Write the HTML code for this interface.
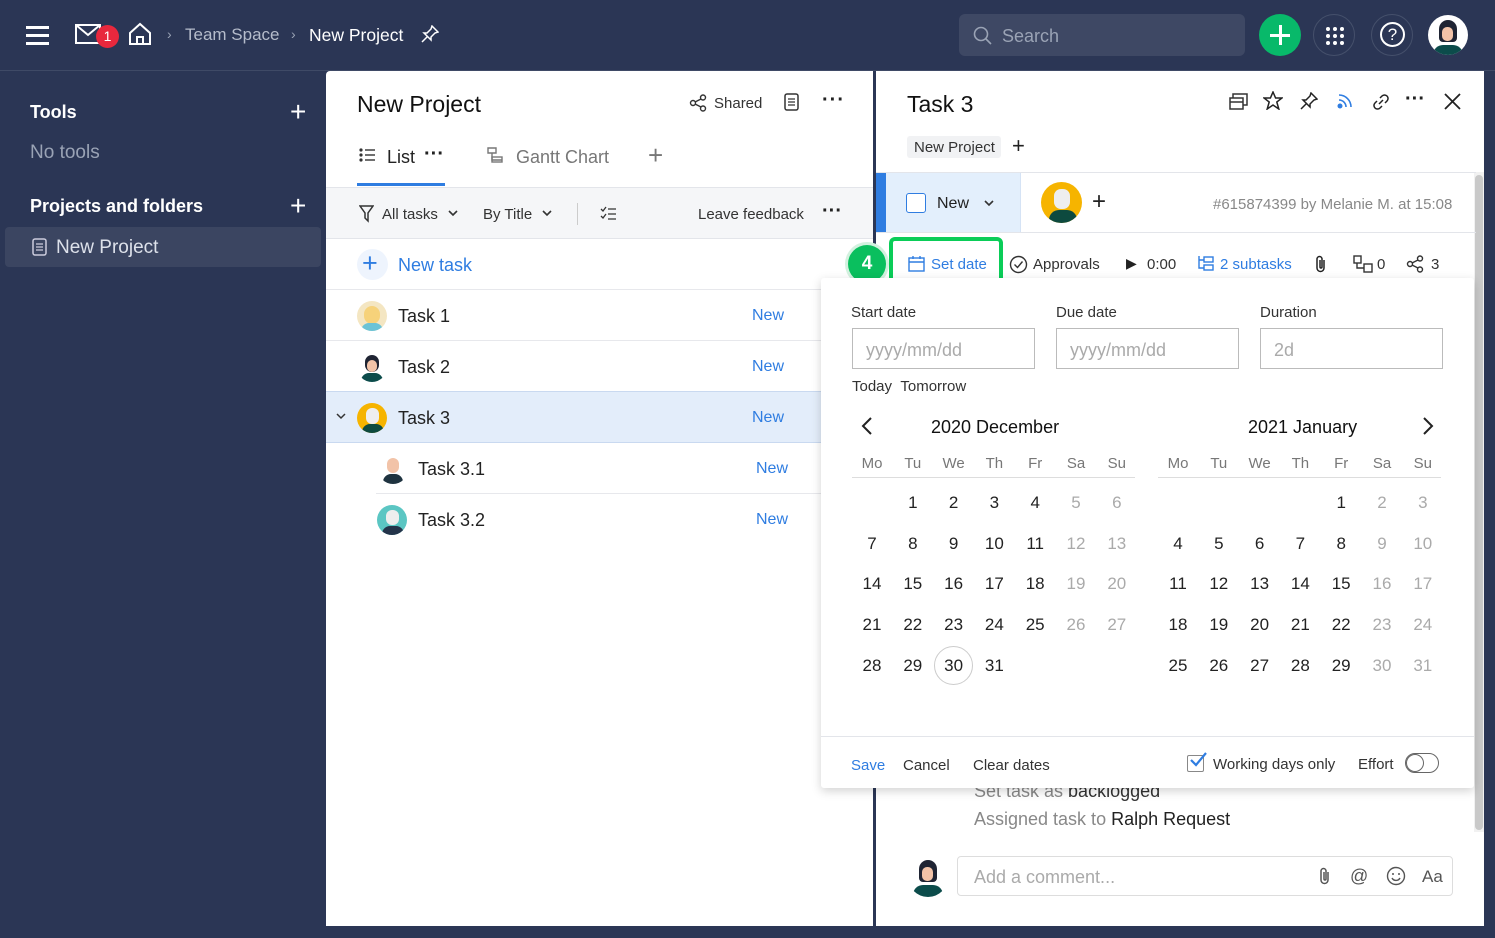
<!DOCTYPE html>
<html><head><meta charset="utf-8"><style>
*{box-sizing:border-box;margin:0;padding:0}
body{width:1495px;height:938px;background:#2b3655;font-family:"Liberation Sans",sans-serif;position:relative;overflow:hidden;color:#222}
.a{position:absolute;white-space:nowrap}
.w{color:#fff}
.g{color:#9aa3b5}
.blue{color:#2f7de1}
.cal span{position:absolute;width:40px;text-align:center;font-size:17px;color:#222;transform:translateX(-50%)}
.cal span.gr{color:#aaa}
.cal span.h{font-size:15px;color:#777}
.av{position:absolute;border-radius:50%;overflow:hidden}
</style></head><body>
<div class="a" style="left:0;top:70px;width:1495px;height:1px;background:#3f4a66"></div>
<div class="a" style="left:26px;top:26px;width:23px;height:3px;background:#fff;box-shadow:0 8px 0 #fff,0 16px 0 #fff"></div>
<svg class="a" style="left:75px;top:24px" width="26" height="20" viewBox="0 0 26 20"><rect x="1" y="1" width="24" height="18" fill="none" stroke="#fff" stroke-width="2"/><path d="M1 1 L13 11 L25 1" fill="none" stroke="#fff" stroke-width="2"/></svg>
<div class="a w" style="left:96px;top:25px;width:23px;height:23px;border-radius:50%;background:#e8283d;font-size:14px;text-align:center;line-height:23px">1</div>
<svg class="a" style="left:128px;top:22px" width="24" height="24" viewBox="0 0 24 24"><path d="M2 11 L12 2 L22 11 V22 H2 Z M9 22 V15 H15 V22" fill="none" stroke="#fff" stroke-width="2"/></svg>
<div class="a g" style="left:167px;top:26px;font-size:14px">›</div>
<div class="a" style="left:185px;top:25px;font-size:17px;color:#b5bccb">Team Space</div>
<div class="a g" style="left:291px;top:26px;font-size:14px">›</div>
<div class="a w" style="left:309px;top:25px;font-size:17.5px">New Project</div>
<svg class="a" style="left:421px;top:25px" width="18" height="18"><path d="M11 1L17 7L14 8L10 12L10 15L3 8L6 8L10 4Z M6.5 11.5L1 17" fill="none" stroke="#fff" stroke-width="1.5"/></svg>
<div class="a" style="left:959px;top:14px;width:286px;height:42px;border-radius:6px;background:#3e4864"></div>
<svg class="a" style="left:973px;top:26px" width="19" height="19"><circle cx="8" cy="8" r="6.5" fill="none" stroke="#9aa3b5" stroke-width="1.6"/><path d="M13 13 L18 18" stroke="#9aa3b5" stroke-width="1.6"/></svg>
<div class="a g" style="left:1002px;top:26px;font-size:18px">Search</div>
<div class="a" style="left:1259px;top:14px;width:42px;height:42px;border-radius:50%;background:#08b96a"></div>
<div class="a" style="left:1270px;top:34px;width:20px;height:2.5px;background:#fff"></div>
<div class="a" style="left:1279px;top:25px;width:2.5px;height:20px;background:#fff"></div>
<div class="a" style="left:1313px;top:14px;width:42px;height:42px;border-radius:50%;border:1px solid #45506b"></div>
<svg class="a" style="left:1325px;top:26px" width="20" height="20"><g fill="#fff"><circle cx="3" cy="3" r="2"/><circle cx="10" cy="3" r="2"/><circle cx="17" cy="3" r="2"/><circle cx="3" cy="10" r="2"/><circle cx="10" cy="10" r="2"/><circle cx="17" cy="10" r="2"/><circle cx="3" cy="17" r="2"/><circle cx="10" cy="17" r="2"/><circle cx="17" cy="17" r="2"/></g></svg>
<div class="a" style="left:1371px;top:14px;width:42px;height:42px;border-radius:50%;border:1px solid #45506b"></div>
<div class="a w" style="left:1380px;top:22px;width:25px;height:25px;border-radius:50%;border:2px solid #fff;text-align:center;font-size:17px;line-height:22px">?</div>
<div class="av" style="left:1428px;top:15px;width:40px;height:40px;background:#fff"><div class="a" style="left:11px;top:5px;width:18px;height:22px;border-radius:9px 9px 4px 4px;background:#1f2433"></div><div class="a" style="left:14px;top:12px;width:11px;height:14px;border-radius:5px;background:#f2c3a8"></div><div class="a" style="left:5px;top:30px;width:30px;height:14px;border-radius:10px 10px 0 0;background:#0c4c4b"></div></div>

<div class="a w" style="left:30px;top:102px;font-size:18px;font-weight:bold">Tools</div>
<div class="a w" style="left:290px;top:96px;font-size:28px;font-weight:300">+</div>
<div class="a" style="left:30px;top:142px;font-size:19px;color:#9aa3b5">No tools</div>
<div class="a w" style="left:30px;top:196px;font-size:18px;font-weight:bold">Projects and folders</div>
<div class="a w" style="left:290px;top:190px;font-size:28px;font-weight:300">+</div>
<div class="a" style="left:5px;top:227px;width:316px;height:40px;border-radius:4px;background:#3b4561"></div>
<svg class="a" style="left:32px;top:237px" width="15" height="19"><rect x="1" y="2" width="13" height="16" rx="2" fill="none" stroke="#ccd" stroke-width="1.5"/><path d="M4 7H11M4 10H11M4 13H11" stroke="#ccd" stroke-width="1.3"/></svg>
<div class="a" style="left:56px;top:237px;font-size:19px;color:#dde1ea">New Project</div>

<div class="a" style="left:326px;top:71px;width:547px;height:855px;background:#fff;border-radius:4px 0 0 0"></div>
<div class="a" style="left:357px;top:91px;font-size:23px;color:#111">New Project</div>
<svg class="a" style="left:689px;top:94px" width="18" height="18"><circle cx="14" cy="3.5" r="2.5" fill="none" stroke="#333" stroke-width="1.4"/><circle cx="4" cy="9" r="2.5" fill="none" stroke="#333" stroke-width="1.4"/><circle cx="14" cy="14.5" r="2.5" fill="none" stroke="#333" stroke-width="1.4"/><path d="M6 8L12 5M6 10L12 13" stroke="#333" stroke-width="1.4"/></svg>
<div class="a" style="left:714px;top:95px;font-size:15px;color:#333">Shared</div>
<svg class="a" style="left:784px;top:92px" width="15" height="19"><rect x="1" y="2" width="13" height="16" rx="2" fill="none" stroke="#333" stroke-width="1.5"/><path d="M4 7H11M4 10H11M4 13H11" stroke="#333" stroke-width="1.3"/></svg>
<div class="a" style="left:822px;top:89px;font-size:20px;font-weight:bold;letter-spacing:1px">···</div>
<svg class="a" style="left:359px;top:148px" width="16" height="14"><g fill="#333"><circle cx="2" cy="2" r="1.6"/><circle cx="2" cy="7" r="1.6"/><circle cx="2" cy="12" r="1.6"/><rect x="6" y="1.3" width="10" height="1.4"/><rect x="6" y="6.3" width="10" height="1.4"/><rect x="6" y="11.3" width="10" height="1.4"/></g></svg>
<div class="a" style="left:387px;top:147px;font-size:18px;color:#222">List</div>
<div class="a" style="left:424px;top:143px;font-size:20px;font-weight:bold">···</div>
<div class="a" style="left:357px;top:183px;width:88px;height:3px;background:#2f7de1"></div>
<svg class="a" style="left:486px;top:147px" width="18" height="16"><path d="M2 1H10V6H2ZM6 6V13H16" fill="none" stroke="#777" stroke-width="1.4"/><rect x="6" y="10" width="10" height="5" fill="none" stroke="#777" stroke-width="1.4"/></svg>
<div class="a" style="left:516px;top:147px;font-size:18px;color:#777">Gantt Chart</div>
<div class="a" style="left:648px;top:140px;font-size:26px;color:#777;font-weight:300">+</div>
<div class="a" style="left:326px;top:187px;width:547px;height:52px;background:#f5f6f8;border-top:1px solid #e3e5ea;border-bottom:1px solid #e3e5ea"></div>
<svg class="a" style="left:359px;top:205px" width="15" height="18"><path d="M1 1H14L9 8V16L6 13V8Z" fill="none" stroke="#333" stroke-width="1.5"/></svg>
<div class="a" style="left:382px;top:206px;font-size:15px;color:#333">All tasks</div>
<svg class="a" style="left:448px;top:210px" width="10" height="7"><path d="M1 1L5 5L9 1" fill="none" stroke="#333" stroke-width="1.6"/></svg>
<div class="a" style="left:483px;top:206px;font-size:15px;color:#333">By Title</div>
<svg class="a" style="left:542px;top:210px" width="10" height="7"><path d="M1 1L5 5L9 1" fill="none" stroke="#333" stroke-width="1.6"/></svg>
<div class="a" style="left:577px;top:203px;width:1px;height:22px;background:#ccc"></div>
<svg class="a" style="left:600px;top:206px" width="17" height="15"><path d="M1 3L3 5L6 1M1 10L3 12L6 8M8 3H16M8 8H16M8 13H16" fill="none" stroke="#333" stroke-width="1.3"/></svg>
<div class="a" style="left:698px;top:206px;font-size:15px;color:#333">Leave feedback</div>
<div class="a" style="left:822px;top:200px;font-size:20px;font-weight:bold">···</div>
<div class="a" style="left:357px;top:249px;width:31px;height:31px;border-radius:50%;background:#eef4fd"></div>
<div class="a blue" style="left:362px;top:248px;font-size:27px;font-weight:300">+</div>
<div class="a blue" style="left:398px;top:255px;font-size:18px">New task</div>
<div class="a" style="left:326px;top:289px;width:495px;height:1px;background:#e7e8ec"></div>
<div class="a" style="left:326px;top:340px;width:495px;height:1px;background:#e7e8ec"></div>
<div class="a" style="left:326px;top:391px;width:495px;height:52px;background:#e3edfa;border-top:1px solid #c9d9f0;border-bottom:1px solid #c9d9f0"></div>
<div class="a" style="left:376px;top:493px;width:445px;height:1px;background:#e7e8ec"></div>
<div class="av" style="left:357px;top:301px;width:30px;height:30px;background:#f4e6c2"><div class="a" style="left:7px;top:5px;width:16px;height:18px;border-radius:8px;background:#f6d27a"></div><div class="a" style="left:4px;top:22px;width:22px;height:10px;background:#6bc3d6;border-radius:8px 8px 0 0"></div></div>
<div class="a" style="left:398px;top:306px;font-size:18px">Task 1</div>
<div class="a blue" style="left:752px;top:307px;font-size:16px">New</div>
<div class="av" style="left:357px;top:352px;width:30px;height:30px;background:#fff"><div class="a" style="left:8px;top:3px;width:14px;height:17px;border-radius:7px;background:#1f2433"></div><div class="a" style="left:10px;top:8px;width:10px;height:12px;border-radius:5px;background:#f2c3a8"></div><div class="a" style="left:4px;top:21px;width:22px;height:10px;background:#0c4c4b;border-radius:8px 8px 0 0"></div></div>
<div class="a" style="left:398px;top:357px;font-size:18px">Task 2</div>
<div class="a blue" style="left:752px;top:358px;font-size:16px">New</div>
<svg class="a" style="left:336px;top:413px" width="10" height="7"><path d="M1 1L5 5L9 1" fill="none" stroke="#333" stroke-width="1.5"/></svg>
<div class="av" style="left:357px;top:403px;width:30px;height:30px;background:#f6b400"><div class="a" style="left:9px;top:5px;width:13px;height:16px;border-radius:6px;background:#eee"></div><div class="a" style="left:5px;top:21px;width:22px;height:10px;background:#0d4a3f;border-radius:8px 8px 0 0"></div></div>
<div class="a" style="left:398px;top:408px;font-size:18px">Task 3</div>
<div class="a blue" style="left:752px;top:409px;font-size:16px">New</div>
<div class="av" style="left:378px;top:454px;width:30px;height:30px;background:#fff"><div class="a" style="left:9px;top:4px;width:12px;height:15px;border-radius:6px;background:#f2c3a8"></div><div class="a" style="left:5px;top:20px;width:20px;height:12px;background:#1f3340;border-radius:8px 8px 0 0"></div></div>
<div class="a" style="left:418px;top:459px;font-size:18px">Task 3.1</div>
<div class="a blue" style="left:756px;top:460px;font-size:16px">New</div>
<div class="av" style="left:377px;top:505px;width:30px;height:30px;background:#5bc6c3"><div class="a" style="left:9px;top:5px;width:13px;height:15px;border-radius:6px;background:#eee"></div><div class="a" style="left:5px;top:21px;width:22px;height:10px;background:#24344a;border-radius:8px 8px 0 0"></div></div>
<div class="a" style="left:418px;top:510px;font-size:18px">Task 3.2</div>
<div class="a blue" style="left:756px;top:511px;font-size:16px">New</div>

<div class="a" style="left:876px;top:71px;width:608px;height:855px;background:#fff"></div>
<div class="a" style="left:1474px;top:172px;width:10px;height:660px;background:#f1f1f1"></div>
<div class="a" style="left:1475px;top:175px;width:8px;height:655px;border-radius:4px;background:#c9c9c9"></div>
<div class="a" style="left:907px;top:91px;font-size:23px;color:#111">Task 3</div>
<svg class="a" style="left:1229px;top:93px" width="19" height="17"><rect x="1" y="5" width="13" height="11" fill="none" stroke="#333" stroke-width="1.5"/><path d="M4 5V1H18V12H14M1 9H14" fill="none" stroke="#333" stroke-width="1.5"/></svg>
<svg class="a" style="left:1263px;top:91px" width="20" height="19"><path d="M10 1L12.6 7H19L13.8 11L15.8 18L10 14L4.2 18L6.2 11L1 7H7.4Z" fill="none" stroke="#222" stroke-width="1.5"/></svg>
<svg class="a" style="left:1300px;top:92px" width="18" height="18"><path d="M11 1L17 7L14 8L10 12L10 15L3 8L6 8L10 4Z M6.5 11.5L1 17" fill="none" stroke="#222" stroke-width="1.5"/></svg>
<svg class="a" style="left:1336px;top:92px" width="18" height="18"><circle cx="4" cy="14" r="2.5" fill="#2f7de1"/><path d="M3 8A7 7 0 0 1 10 15M3 3A12 12 0 0 1 15 15" fill="none" stroke="#2f7de1" stroke-width="1.6"/></svg>
<svg class="a" style="left:1372px;top:93px" width="18" height="18"><path d="M7 11L11 7M8 5L10 3A3 3 0 0 1 15 8L13 10M10 13L8 15A3 3 0 0 1 3 10L5 8" fill="none" stroke="#222" stroke-width="1.5"/></svg>
<div class="a" style="left:1405px;top:88px;font-size:20px;font-weight:bold">···</div>
<svg class="a" style="left:1444px;top:93px" width="17" height="17"><path d="M1 1L16 16M16 1L1 16" stroke="#222" stroke-width="1.8"/></svg>
<div class="a" style="left:907px;top:136px;width:94px;height:22px;background:#f1f2f4;border-radius:3px;font-size:15px;padding:3px 7px;color:#333">New Project</div>
<div class="a" style="left:1012px;top:133px;font-size:22px;font-weight:300">+</div>
<div class="a" style="left:876px;top:172px;width:600px;height:1px;background:#e3e5ea"></div>
<div class="a" style="left:876px;top:232px;width:600px;height:1px;background:#e3e5ea"></div>
<div class="a" style="left:876px;top:173px;width:145px;height:59px;background:#e3effc;border-left:10px solid #2f7de1;border-right:1px solid #d5e3f5"></div>
<div class="a" style="left:906px;top:193px;width:20px;height:20px;border:1.5px solid #2f7de1;border-radius:3px;background:#fff"></div>
<div class="a" style="left:937px;top:195px;font-size:16px">New</div>
<svg class="a" style="left:984px;top:200px" width="10" height="7"><path d="M1 1L5 5L9 1" fill="none" stroke="#333" stroke-width="1.6"/></svg>
<div class="av" style="left:1041px;top:182px;width:41px;height:41px;background:#f6b400"><div class="a" style="left:13px;top:7px;width:16px;height:20px;border-radius:7px;background:#eee"></div><div class="a" style="left:8px;top:28px;width:28px;height:14px;background:#0d4a3f;border-radius:10px 10px 0 0"></div></div>
<div class="a" style="left:1092px;top:188px;font-size:24px;font-weight:300">+</div>
<div class="a" style="left:1213px;top:196px;font-size:15px;color:#888">#615874399 by Melanie M. at 15:08</div>
<div class="a" style="left:845px;top:242px;width:44px;height:44px;border-radius:50%;background:#d3f1df"></div>
<div class="a" style="left:848px;top:245px;width:38px;height:38px;border-radius:50%;background:#0abf5e;color:#fff;font-weight:bold;font-size:19px;text-align:center;line-height:38px">4</div>
<div class="a" style="left:889px;top:237px;width:114px;height:55px;border:4px solid #0acd58;border-radius:6px;background:#fff"></div>
<svg class="a" style="left:908px;top:255px" width="17" height="17"><rect x="1" y="3" width="15" height="13" fill="none" stroke="#2f7de1" stroke-width="1.4"/><path d="M1 7H16M5 1V4M12 1V4" stroke="#2f7de1" stroke-width="1.4"/></svg>
<div class="a blue" style="left:931px;top:256px;font-size:15px">Set date</div>
<svg class="a" style="left:1009px;top:255px" width="19" height="19"><circle cx="9.5" cy="9.5" r="8" fill="none" stroke="#333" stroke-width="1.4"/><path d="M5.5 9.5L8.5 12.5L13.5 6.5" fill="none" stroke="#333" stroke-width="1.4"/></svg>
<div class="a" style="left:1033px;top:256px;font-size:15px;color:#333">Approvals</div>
<div class="a" style="left:1126px;top:255px;font-size:14px">▶</div>
<div class="a" style="left:1147px;top:256px;font-size:15px;color:#333">0:00</div>
<svg class="a" style="left:1197px;top:255px" width="17" height="17"><path d="M2 1V13H7M2 5H7" fill="none" stroke="#2f7de1" stroke-width="1.4"/><rect x="7" y="2" width="9" height="5" fill="none" stroke="#2f7de1" stroke-width="1.4"/><rect x="7" y="10" width="9" height="5" fill="none" stroke="#2f7de1" stroke-width="1.4"/></svg>
<div class="a blue" style="left:1220px;top:256px;font-size:15px">2 subtasks</div>
<svg class="a" style="left:1315px;top:254px" width="12" height="19"><path d="M9 6V14A3.5 3.5 0 0 1 2 14V5A2.5 2.5 0 0 1 7 5V13A1 1 0 0 1 5 13V6" fill="none" stroke="#222" stroke-width="1.5"/></svg>
<svg class="a" style="left:1353px;top:255px" width="20" height="18"><rect x="1" y="1" width="7" height="7" fill="none" stroke="#333" stroke-width="1.4"/><rect x="11" y="9" width="8" height="8" fill="none" stroke="#333" stroke-width="1.4"/><path d="M4 8V13H11" fill="none" stroke="#333" stroke-width="1.4"/></svg>
<div class="a" style="left:1377px;top:256px;font-size:15px;color:#333">0</div>
<svg class="a" style="left:1406px;top:255px" width="18" height="18"><circle cx="14" cy="3.5" r="2.5" fill="none" stroke="#333" stroke-width="1.4"/><circle cx="4" cy="9" r="2.5" fill="none" stroke="#333" stroke-width="1.4"/><circle cx="14" cy="14.5" r="2.5" fill="none" stroke="#333" stroke-width="1.4"/><path d="M6 8L12 5M6 10L12 13" stroke="#333" stroke-width="1.4"/></svg>
<div class="a" style="left:1431px;top:256px;font-size:15px;color:#333">3</div>
<div class="a" style="left:974px;top:781px;font-size:18px;color:#888">Set task as <span style="color:#333">backlogged</span></div>
<div class="a" style="left:974px;top:809px;font-size:18px;color:#888">Assigned task to <span style="color:#222">Ralph Request</span></div>
<div class="av" style="left:908px;top:857px;width:40px;height:40px;background:#fff"><div class="a" style="left:11px;top:3px;width:18px;height:22px;border-radius:9px 9px 4px 4px;background:#1f2433"></div><div class="a" style="left:14px;top:10px;width:11px;height:14px;border-radius:5px;background:#f2c3a8"></div><div class="a" style="left:5px;top:28px;width:30px;height:14px;border-radius:10px 10px 0 0;background:#0c4c4b"></div></div>
<div class="a" style="left:957px;top:856px;width:496px;height:40px;border:1px solid #ddd;border-radius:4px"></div>
<div class="a" style="left:974px;top:867px;font-size:18px;color:#aaa">Add a comment...</div>
<svg class="a" style="left:1319px;top:866px" width="12" height="19"><path d="M9 6V14A3.5 3.5 0 0 1 2 14V5A2.5 2.5 0 0 1 7 5V13A1 1 0 0 1 5 13V6" fill="none" stroke="#555" stroke-width="1.5"/></svg>
<div class="a" style="left:1350px;top:866px;font-size:18px;color:#555">@</div>
<svg class="a" style="left:1386px;top:866px" width="20" height="20"><circle cx="10" cy="10" r="8.5" fill="none" stroke="#555" stroke-width="1.4"/><circle cx="7" cy="8" r="1" fill="#555"/><circle cx="13" cy="8" r="1" fill="#555"/><path d="M6 12A4.5 4.5 0 0 0 14 12" fill="none" stroke="#555" stroke-width="1.4"/></svg>
<div class="a" style="left:1422px;top:867px;font-size:17px;color:#555">Aa</div>

<div class="a" style="left:821px;top:278px;width:653px;height:510px;background:#fff;box-shadow:0 3px 10px rgba(0,0,0,.18);border-radius:3px"></div>
<div class="a" style="left:821px;top:736px;width:653px;height:1px;background:#e3e5ea"></div>
<div class="a" style="left:851px;top:304px;font-size:15px;color:#333">Start date</div>
<div class="a" style="left:1056px;top:304px;font-size:15px;color:#333">Due date</div>
<div class="a" style="left:1260px;top:304px;font-size:15px;color:#333">Duration</div>
<div class="a" style="left:852px;top:328px;width:183px;height:41px;border:1px solid #bbb;font-size:18px;color:#aaa;padding:11px 13px">yyyy/mm/dd</div>
<div class="a" style="left:1056px;top:328px;width:183px;height:41px;border:1px solid #bbb;font-size:18px;color:#aaa;padding:11px 13px">yyyy/mm/dd</div>
<div class="a" style="left:1260px;top:328px;width:183px;height:41px;border:1px solid #bbb;font-size:18px;color:#aaa;padding:11px 13px">2d</div>
<div class="a" style="left:852px;top:378px;font-size:15px;color:#333">Today &nbsp;Tomorrow</div>
<svg class="a" style="left:861px;top:416px" width="12" height="20"><path d="M10 2L2 10L10 18" fill="none" stroke="#222" stroke-width="2"/></svg>
<svg class="a" style="left:1422px;top:416px" width="12" height="20"><path d="M2 2L10 10L2 18" fill="none" stroke="#222" stroke-width="2"/></svg>
<div class="a" style="left:931px;top:417px;font-size:18px;color:#111">2020 December</div>
<div class="a" style="left:1248px;top:417px;font-size:18px;color:#111">2021 January</div>
<div class="a" style="left:852px;top:477px;width:283px;height:1px;background:#ddd"></div>
<div class="a" style="left:1158px;top:477px;width:283px;height:1px;background:#ddd"></div>
<div class="a" style="left:934px;top:646px;width:39px;height:39px;border-radius:50%;border:1px solid #ccc"></div>
<div class="cal" id="cal"></div>
<script>
(function(){var c=document.getElementById('cal'),h='';
var ys=[502,543,583,624,665];var hd=['Mo','Tu','We','Th','Fr','Sa','Su'];
function m(x0,start,n){for(var i=0;i<7;i++)h+='<span class="h" style="left:'+(x0+i*40.8)+'px;top:455px">'+hd[i]+'</span>';
for(var d=1;d<=n;d++){var p=start+d-1,col=p%7,row=Math.floor(p/7);h+='<span class="'+(col>=5?'gr':'')+'" style="left:'+(x0+col*40.8)+'px;top:'+(ys[row]-9)+'px">'+d+'</span>';}}
m(872,1,31);m(1178,4,31);c.innerHTML=h;})();
</script>
<div class="a blue" style="left:851px;top:757px;font-size:15px">Save</div>
<div class="a" style="left:903px;top:757px;font-size:15px;color:#333">Cancel</div>
<div class="a" style="left:973px;top:757px;font-size:15px;color:#333">Clear dates</div>
<div class="a" style="left:1187px;top:755px;width:17px;height:17px;border:1.5px solid #888;border-radius:2px"></div>
<svg class="a" style="left:1188px;top:750px" width="20" height="20"><path d="M3 10L8 15L18 3" fill="none" stroke="#2f7de1" stroke-width="2.2"/></svg>
<div class="a" style="left:1213px;top:756px;font-size:15px;color:#333">Working days only</div>
<div class="a" style="left:1358px;top:756px;font-size:15px;color:#333">Effort</div>
<div class="a" style="left:1405px;top:753px;width:34px;height:20px;border:1.5px solid #666;border-radius:10px"></div>
<div class="a" style="left:1406px;top:754px;width:18px;height:18px;border:1.5px solid #666;border-radius:50%;background:#fff"></div>
</body></html>
